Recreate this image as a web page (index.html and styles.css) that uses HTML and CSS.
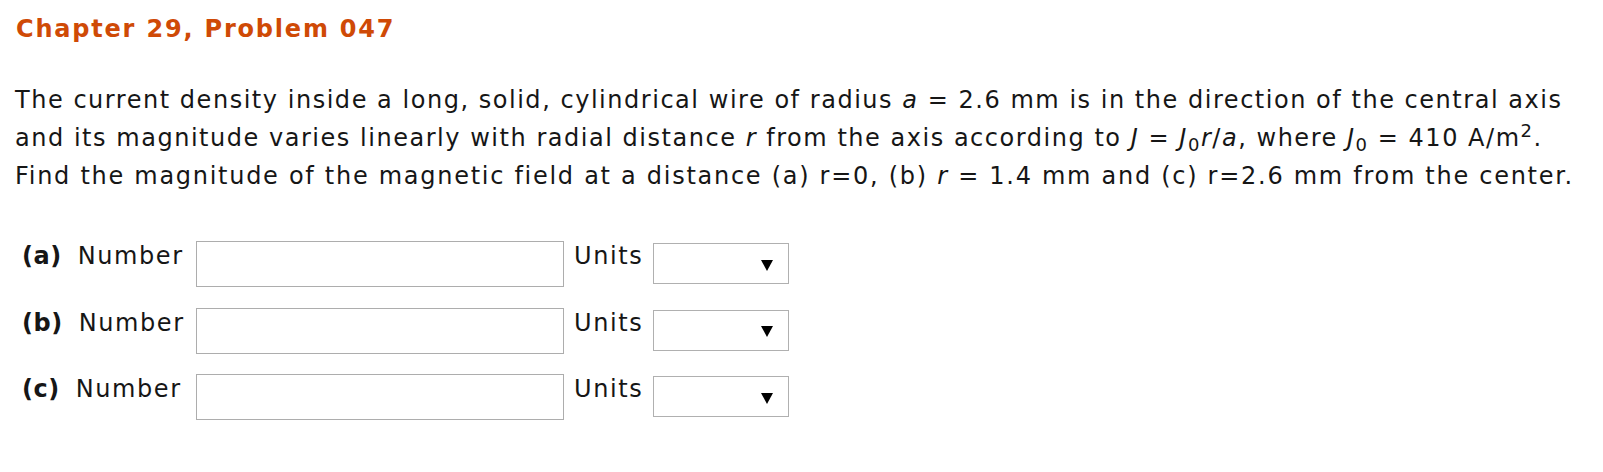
FILE: index.html
```html
<!DOCTYPE html>
<html>
<head>
<meta charset="utf-8">
<link rel="stylesheet" href="styles.css">
</head>
<body>
<div class="page">
  <h1 class="title">Chapter 29, Problem 047</h1>
  <p class="question">The current density inside a long, solid, cylindrical wire of radius <i>a</i> = 2.6 mm is in the direction of the central axis<br>and its magnitude varies linearly with radial distance <i>r</i> from the axis according to <i>J</i> = <i>J</i><sub>0</sub><i>r</i>/<i>a</i>, where <i>J</i><sub>0</sub> = 410 A/m<sup>2</sup>.<br><span class="l3">Find the magnitude of the magnetic field at a distance (a) r=0, (b) <i>r</i> = 1.4 mm and (c) r=2.6 mm from the center.</span></p>
  <div class="answers">
    <div class="row">
      <span class="label"><b>(a)</b><span class="num">Number</span></span>
      <div class="input"></div>
      <span class="units">Units</span>
      <div class="select"><svg class="arrow" width="12" height="12" viewBox="0 0 12 12"><polygon points="0,1 12,1 6,12" fill="#000"/></svg></div>
    </div>
    <div class="row">
      <span class="label"><b>(b)</b><span class="num">Number</span></span>
      <div class="input"></div>
      <span class="units">Units</span>
      <div class="select"><svg class="arrow" width="12" height="12" viewBox="0 0 12 12"><polygon points="0,1 12,1 6,12" fill="#000"/></svg></div>
    </div>
    <div class="row">
      <span class="label"><b>(c)</b><span class="num">Number</span></span>
      <div class="input"></div>
      <span class="units">Units</span>
      <div class="select"><svg class="arrow" width="12" height="12" viewBox="0 0 12 12"><polygon points="0,1 12,1 6,12" fill="#000"/></svg></div>
    </div>
  </div>
</div>
</body>
</html>
```

FILE: styles.css
```css
html, body {
  margin: 0;
  padding: 0;
  background: #fff;
}
.page {
  font-family: "DejaVu Sans", Verdana, sans-serif;
  font-size: 24px;
  color: #161616;
  padding: 14px 0 0 15px;
}
.title {
  margin: 0 0 0 1px;
  font-size: 24px;
  line-height: 30px;
  font-weight: bold;
  letter-spacing: 1.8px;
  color: #cf4a06;
}
.question {
  margin: 37px 0 0 0;
  line-height: 38px;
  letter-spacing: 1.53px;
  white-space: nowrap;
}
.question .l3 {
  letter-spacing: 1.72px;
}
.question sub, .question sup {
  font-size: 0.75em;
  line-height: 0;
}
.question sub { vertical-align: -0.3em; }
.question sup { vertical-align: 0.5em; }
.answers {
  margin-top: 46px;
  padding-left: 7px;
  display: flex;
  flex-direction: column;
  gap: 20.5px;
}
.row {
  display: flex;
  align-items: flex-start;
  height: 46px;
}
.label, .units {
  line-height: 30px;
  white-space: nowrap;
  flex: none;
}
.label {
  width: 165px;
  display: flex;
}
.label b {
  font-weight: bold;
  letter-spacing: 0.5px;
}
.num {
  margin-left: 16px;
  letter-spacing: 1.6px;
}
.input {
  flex: none;
  margin-left: 9px;
  width: 366px;
  height: 44px;
  border: 1px solid #adadad;
  background: #fff;
}
.units {
  margin-left: 10px;
  width: 67px;
  letter-spacing: 1.6px;
}
.select {
  flex: none;
  margin-left: 12px;
  margin-top: 2px;
  width: 136px;
  height: 41px;
  border: 1px solid #b0b0b0;
  display: flex;
  align-items: center;
  justify-content: flex-end;
  padding-right: 15px;
  box-sizing: border-box;
}
.arrow {
  margin-top: 2px;
}
```
